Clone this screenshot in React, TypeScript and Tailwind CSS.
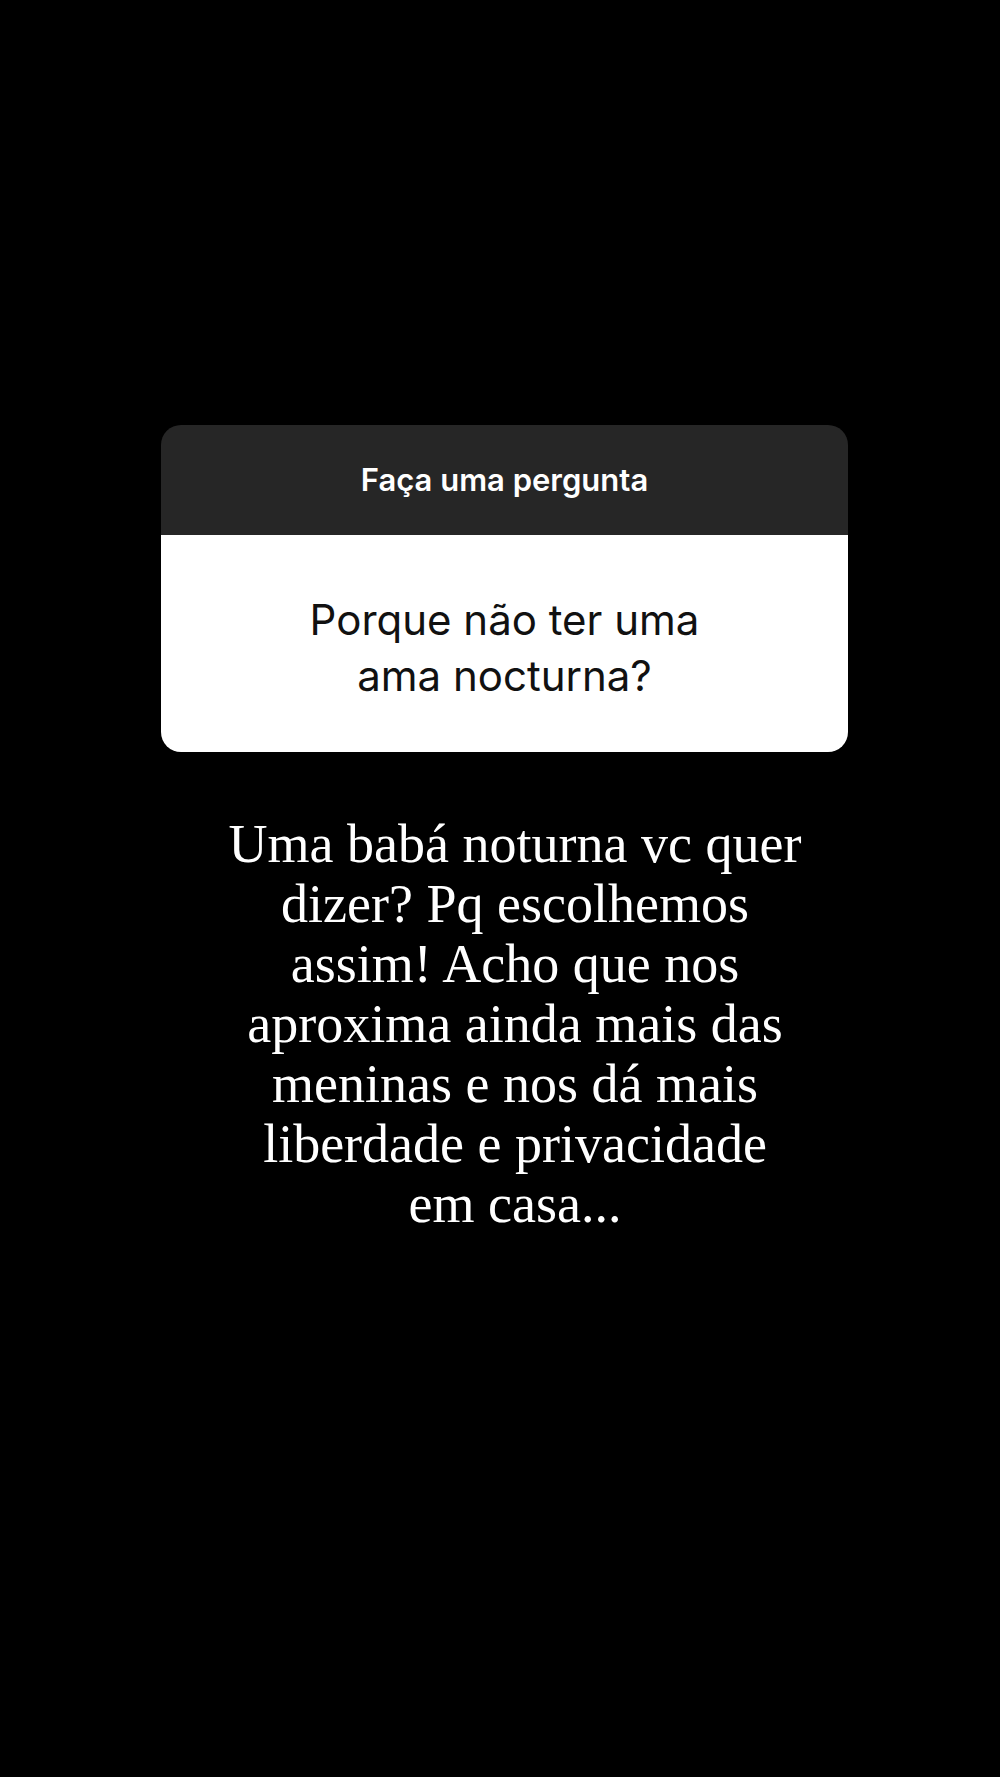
export default function App() {
  return (
    <div className="w-[1000px] h-[1777px] bg-black flex flex-col pt-[425px]">
      <div className="ml-[161px] w-[687px] rounded-[20px] overflow-hidden">
        <div className="h-[110px] bg-[#262626] flex items-center justify-center">
          <span
            className="text-white text-[31px] font-semibold"
            style={{ fontFamily: "Inter, 'Noto Sans', sans-serif" }}
          >
            Faça uma pergunta
          </span>
        </div>
        <div className="h-[217px] bg-white flex items-center justify-center pt-[8px]">
          <p
            className="text-[#111] text-[42px] leading-[56px] text-center"
            style={{ fontFamily: "Inter, 'Noto Sans', sans-serif" }}
          >
            Porque não ter uma
            <br />
            ama nocturna?
          </p>
        </div>
      </div>
      <p
        className="mt-[62px] pl-[30px] text-white text-[54px] leading-[60px] text-center"
        style={{ fontFamily: "'Liberation Serif', serif" }}
      >
        Uma babá noturna vc quer
        <br />
        dizer? Pq escolhemos
        <br />
        assim! Acho que nos
        <br />
        aproxima ainda mais das
        <br />
        meninas e nos dá mais
        <br />
        liberdade e privacidade
        <br />
        em casa...
      </p>
    </div>
  );
}
